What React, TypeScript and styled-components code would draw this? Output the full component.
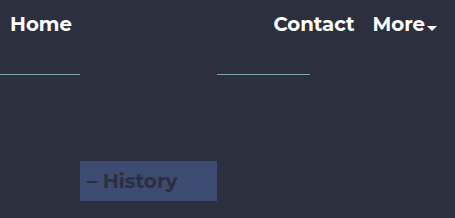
import React from "react";
import styled, { createGlobalStyle } from "styled-components";

const GlobalStyle = createGlobalStyle`
  html, body {
    margin: 0;
    padding: 0;
    background: #2b2f3e;
  }
  body {
    font-family: Montserrat, "DejaVu Sans", sans-serif;
  }
`;

const Page = styled.div`
  width: 455px;
  height: 218px;
  background: #2b2f3e;
  overflow: hidden;
`;

const NavBar = styled.nav`
  display: flex;
  justify-content: space-between;
  align-items: center;
  height: 48px;
  padding: 0 18px 0 10px;
`;

const NavGroup = styled.div`
  display: flex;
  align-items: center;
  gap: 18px;
`;

const NavLink = styled.a`
  color: #ffffff;
  font-weight: 700;
  font-size: 19.7px;
  text-decoration: none;
  display: flex;
  align-items: center;
`;

const Caret = styled.span`
  display: inline-block;
  margin-left: 2px;
  margin-top: 8px;
  width: 0;
  height: 0;
  border-left: 5px solid transparent;
  border-right: 5px solid transparent;
  border-top: 5px solid #ffffff;
`;

const Grid = styled.div`
  display: grid;
  grid-template-columns: 80px 137px 93px;
  grid-template-rows: 1px 86px 40px;
  margin-top: 26px;
`;

const Rule = styled.div<{ $col: number }>`
  grid-column: ${(p) => p.$col};
  grid-row: 1;
  background: #7ea4b3;
`;

const Tab = styled.div`
  grid-column: 2;
  grid-row: 3;
  background: #3d4a71;
  color: #2b2f3e;
  font-weight: 700;
  font-size: 20px;
  display: flex;
  align-items: center;
  padding-left: 7px;
`;

export default function App() {
  return (
    <Page>
      <GlobalStyle />
      <NavBar>
        <NavLink>Home</NavLink>
        <NavGroup>
          <NavLink>Contact</NavLink>
          <NavLink>
            More
            <Caret />
          </NavLink>
        </NavGroup>
      </NavBar>
      <Grid>
        <Rule $col={1} />
        <Rule $col={3} />
        <Tab>– History</Tab>
      </Grid>
    </Page>
  );
}
